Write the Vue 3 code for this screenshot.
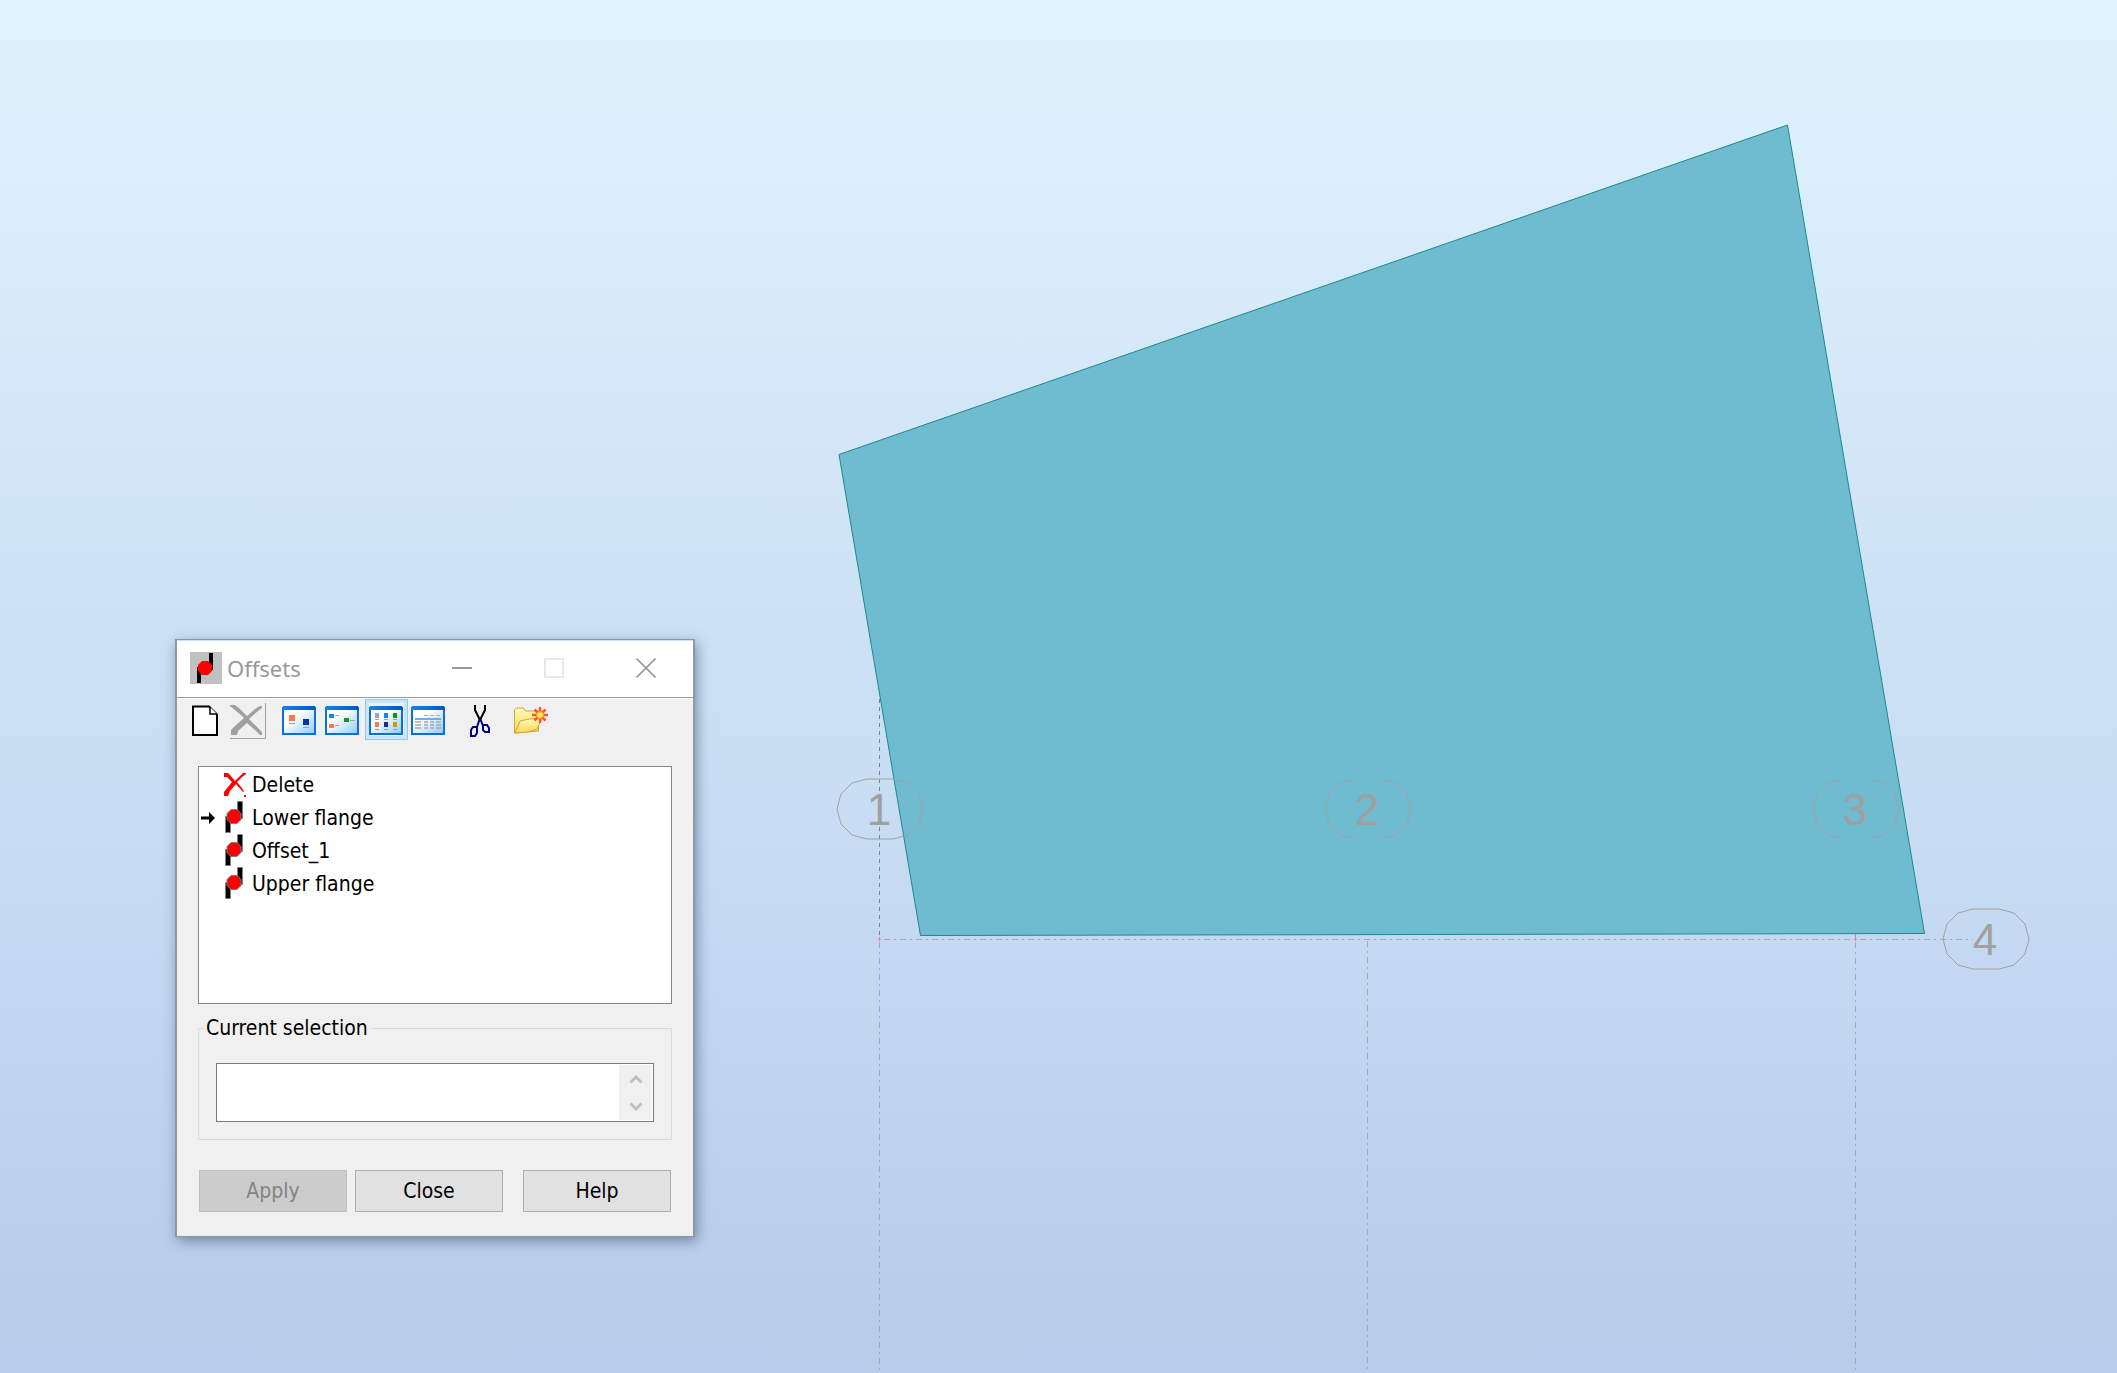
<script setup>
const bubble = [[-43, 0], [-39, -15], [-28, -26], [-13, -30], [13, -30], [28, -26], [39, -15], [43, 0], [39, 15], [28, 26], [13, 30], [-13, 30], [-28, 26], [-39, 15]]
const closed = 'M' + bubble.map((p) => p.join(' ')).join('L') + 'Z'
const open = 'M-13 -30L-28 -26L-39 -15L-43 0L-39 15L-28 26L-13 30M13 -30L28 -26L39 -15L43 0L39 15L28 26L13 30'

const labels = [
  { text: '1', x: 880, y: 809, d: closed },
  { text: '2', x: 1368, y: 809, d: open },
  { text: '3', x: 1856, y: 809, d: open },
  { text: '4', x: 1986, y: 939, d: closed },
]

const items = [
  { name: 'Delete', kind: 'delete' },
  { name: 'Lower flange', kind: 'offset', current: true },
  { name: 'Offset_1', kind: 'offset' },
  { name: 'Upper flange', kind: 'offset' },
]
</script>

<template>
  <main class="workspace">
    <svg class="view" viewBox="0 0 2117 1373" preserveAspectRatio="xMinYMin slice" role="img" aria-label="Panel on grid axes">
      <polygon class="panel" points="839,454.500 1787.500,125 1924.500,933.500 920.500,935.500" />
      <g class="axes" shape-rendering="crispEdges">
        <path class="hidden-line" d="M879.500 699V939" />
        <path d="M884 939.500H1973M879.500 942V1373M1367.500 941V1373M1855.500 942V1373" />
        <path class="solid" d="M1855.500 934V938" />
      </g>
      <path class="node" d="M878 939h3M879.500 937v4M1854 939h3M1855.500 937v4" />
      <g v-for="l in labels" :key="l.text" :transform="`translate(${l.x} ${l.y})`">
        <path class="bubble" :d="l.d" />
        <text class="digit" x="-1" y="16">{{ l.text }}</text>
      </g>
    </svg>

    <section class="dialog" aria-labelledby="dialog-title">
      <header class="titlebar">
        <svg class="app-icon" viewBox="0 0 32 32">
          <path fill="#c0c0c0" d="M0 0h32v32H0z" />
          <path d="M19 1h4v17h-4zM7 15h4v16H7z" />
          <path fill="#f00" d="M12 9h6l4 4v6l-4 4h-6l-4-4v-6z" />
        </svg>
        <h1 id="dialog-title">Offsets</h1>
        <button class="caption" aria-label="Minimize">
          <svg viewBox="0 0 20 20"><path stroke="#999" stroke-width="2" d="M0 10h20" /></svg>
        </button>
        <button class="caption" aria-label="Maximize" disabled>
          <svg viewBox="0 0 20 20"><path fill="none" stroke="#e8e8e8" stroke-width="2" d="M1 1h18v18H1z" /></svg>
        </button>
        <button class="caption" aria-label="Close window">
          <svg viewBox="0 0 20 20"><path stroke="#999" stroke-width="1.600" d="M.5.500l19 19M19.500.500l-19 19" /></svg>
        </button>
      </header>

      <div class="toolbar" role="toolbar" aria-label="Offsets tools">
        <button class="tool page" aria-label="New">
          <svg width="26" height="32" viewBox="0 0 26 32">
            <path fill="#fff" stroke="#000" stroke-width="2" d="M1 1.500h16l8 8V30H1z" />
            <path fill="#fff" stroke="#000" stroke-width="1.500" d="M18 2v7h7" />
          </svg>
        </button>
        <button class="tool cross" aria-label="Remove" disabled>
          <svg width="36" height="36" viewBox="0 0 36 36">
            <path fill="#a0a0a0" d="M0 2h5l5 4 7 7 8-7 5-3h2v2l-4 3-9 8 9 9 4 4v3h-2l-3-3-10-9-9 8-1 4H1v-5l4-4 9-8-9-8-5-4z" />
            <path fill="none" stroke="#a0a0a0" d="M0 35.500h35.500V0" />
          </svg>
        </button>
        <svg width="0" height="0" class="defs" aria-hidden="true">
          <defs>
            <linearGradient id="pane" x1="0" y1="0" x2="1" y2="1">
              <stop offset=".35" stop-color="#fff" /><stop offset="1" stop-color="#8fc8ff" />
            </linearGradient>
            <linearGradient id="bar" x1="0" y1="0" x2="1" y2="0">
              <stop offset="0" stop-color="#1683ee" /><stop offset="1" stop-color="#0058c0" />
            </linearGradient>
            <linearGradient id="folder" x1="0" y1="0" x2="0" y2="1">
              <stop offset="0" stop-color="#fffbb0" /><stop offset="1" stop-color="#fbd75c" />
            </linearGradient>
          </defs>
        </svg>
        <button class="tool large" aria-label="Large icons">
          <svg width="34" height="29" viewBox="0 0 34 29">
            <path fill="url(#pane)" stroke="#0b6fdc" stroke-width="2" d="M1 2h32v26H1z" /><path fill="url(#bar)" d="M1 0h32l1 4H0z" />
            <path fill="#ff7847" d="M7 9h6v6H7z" /><path fill="#0a3699" d="M21 13h6v6h-6z" />
            <path fill="#a0a0a0" d="M7 17h6v1H7zM21 21h6v1h-6z" />
          </svg>
        </button>
        <button class="tool small" aria-label="Small icons">
          <svg width="34" height="29" viewBox="0 0 34 29">
            <path fill="url(#pane)" stroke="#0b6fdc" stroke-width="2" d="M1 2h32v26H1z" /><path fill="url(#bar)" d="M1 0h32l1 4H0z" />
            <path fill="#1683ee" d="M4 8h5v4H4z" /><path fill="#ff7847" d="M4 18h5v4H4z" /><path fill="#0a9a0a" d="M19 12h5v4h-5z" />
            <path fill="#a0a0a0" d="M10 9h4v1h-4zM10 19h4v1h-4zM25 14h5v1h-5z" />
          </svg>
        </button>
        <button class="tool list selected" aria-label="List" aria-pressed="true">
          <svg width="34" height="29" viewBox="0 0 34 29">
            <path fill="url(#pane)" stroke="#0b6fdc" stroke-width="2" d="M1 2h32v26H1z" /><path fill="url(#bar)" d="M1 0h32l1 4H0z" />
            <path fill="#a79bd4" d="M6 7h4v5H6z" /><path fill="#1683ee" d="M15 7h4v5h-4z" /><path fill="#0a9a0a" d="M24 7h4v5h-4z" />
            <path fill="#ff7847" d="M6 16h4v5H6z" /><path fill="#0a3699" d="M15 16h4v5h-4z" /><path fill="#d29b00" d="M24 16h4v5h-4z" />
            <path fill="#a0a0a0" d="M6 13h4v1H6zM15 13h4v1h-4zM24 13h4v1h-4zM6 23h4v1H6zM15 23h4v1h-4zM24 23h4v1h-4z" />
          </svg>
        </button>
        <button class="tool details" aria-label="Details">
          <svg width="34" height="29" viewBox="0 0 34 29">
            <path fill="url(#pane)" stroke="#0b6fdc" stroke-width="2" d="M1 2h32v26H1z" /><path fill="url(#bar)" d="M1 0h32l1 4H0z" />
            <path stroke="#6aaeee" stroke-width="2" d="M4 13h26" />
            <path stroke="#b0b0b0" stroke-dasharray="4 2" d="M13 9.500h17" />
            <path stroke="#a8a8a8" stroke-width="1.500" stroke-dasharray="6 3 4 2 4 2 5 9" d="M4 16h26M4 19h26M4 22h26" />
          </svg>
        </button>
        <button class="tool scissors" aria-label="Cut">
          <svg width="20" height="34" viewBox="0 0 20 34">
            <path fill="none" stroke="#000" stroke-width="2" d="M5 1v5l5 10M15 1v5l-5 10" />
            <path fill="none" stroke="#000080" stroke-width="2" d="M10 14l-3 9M10 14l3 8M3 23h4v6l-2 3H1v-6zM13 21h4l2 3v4h-4l-2-2z" />
          </svg>
        </button>
        <button class="tool folder" aria-label="Open folder">
          <svg width="34" height="27" viewBox="0 0 34 27">
            <path fill="url(#folder)" stroke="#d2a53a" d="M.5 26V3l2-2h7l2 3h13v20L2 26z" />
            <path fill="url(#folder)" stroke="#d2a53a" d="M1 26l5-12 9-2 13-1-5 11-9 3z" />
            <path stroke="#fb5531" stroke-width="2.500" d="M26 0v16M18 8h16M20.500 2.500l11 11M31.500 2.500l-11 11" />
            <circle cx="26" cy="8" r="3.500" fill="#ffe94d" stroke="#ff8e2a" />
          </svg>
        </button>
      </div>

      <div class="body">
        <ul class="items" aria-label="Offsets list">
          <li v-for="item in items" :key="item.name">
            <button class="item" :aria-current="item.current ? 'true' : undefined">
              <svg class="marker" viewBox="0 0 14 12">
                <path v-if="item.current" d="M0 4.500h8V0l6 6-6 6V7.500H0z" />
              </svg>
              <svg v-if="item.kind === 'delete'" class="glyph" viewBox="0 0 22 33">
                <path fill="#f00" d="M0 5h4l2 2 5 6 4-4 4-4h3v1l-4 3-5 5 4 5 3 4-1 1-7-8-6 7-2 5H0v-4l8-10-5-5H0zM20 27h2v2h-2z" />
              </svg>
              <svg v-else class="glyph" viewBox="0 0 22 33">
                <path stroke="#808080" d="M13.500.500h5v17h-5zM1.500 15.500h5v16h-5z" />
                <path fill="#f00" stroke="#808080" d="M7 8.500h6l4 4v6l-4 4H7L3 18.500v-6z" />
              </svg>
              <span>{{ item.name }}</span>
            </button>
          </li>
        </ul>

        <fieldset class="selection">
          <legend><label for="current-selection">Current selection</label></legend>
          <div class="field">
            <textarea id="current-selection"></textarea>
            <div class="scroll" aria-hidden="true">
              <svg viewBox="0 0 12 9"><path d="M.5 7.500L6 2l5.500 5.500" /></svg>
              <svg viewBox="0 0 12 9"><path d="M.5 1.500L6 7l5.500-5.500" /></svg>
            </div>
          </div>
        </fieldset>

        <footer class="actions">
          <button class="action" disabled>Apply</button>
          <button class="action">Close</button>
          <button class="action help">Help</button>
        </footer>
      </div>
    </section>
  </main>
</template>

<style>
body {
  margin: 0;
}
</style>

<style scoped>
* {
  box-sizing: border-box;
}
.workspace {
  position: relative;
  min-height: 100vh;
  overflow: hidden;
  background: linear-gradient(#dff3fe, #b8cceb);
  font-family: "DejaVu Sans Condensed", "DejaVu Sans", sans-serif;
  font-stretch: condensed;
  font-size: 21px;
  color: #000;
}
.view {
  display: block;
  width: 100%;
  height: 100vh;
}
.panel {
  fill: #6fbbcf;
  stroke: #1c8a8e;
  stroke-width: 1;
}
.axes path {
  fill: none;
  stroke: #a5a9b2;
  stroke-dasharray: 6 4 2 4;
}
.axes .hidden-line {
  stroke: #84808a;
  stroke-dasharray: 4 4;
}
.axes .solid {
  stroke: #9a9aa4;
  stroke-dasharray: none;
}
.node {
  stroke: #f08090;
}
.bubble {
  fill: none;
  stroke: #a3a0a2;
  stroke-width: 1;
}
.digit {
  fill: #a0a0a0;
  font: 44px "Liberation Sans", Arial, sans-serif;
  text-anchor: middle;
}
.dialog {
  position: absolute;
  left: 175px;
  top: 639px;
  width: 520px;
  border: solid #8b98a6;
  border-width: 1px 2px;
  background: #f0f0f0;
  box-shadow: 2px 4px 12px rgba(40, 60, 90, 0.5);
}
button {
  padding: 0;
  border: 0;
  background: none;
  font: inherit;
  color: inherit;
}
.titlebar {
  display: flex;
  align-items: center;
  height: 58px;
  padding: 0 1px 2px 13px;
  border-top: 1px solid #cfe0f2;
  border-bottom: 1px solid #999;
  background: #fff;
}
.app-icon {
  width: 32px;
  height: 32px;
}
h1 {
  flex: 1;
  margin: 0 0 0 5px;
  font: 22px/30px "Noto Sans", sans-serif;
  color: #999;
}
.caption {
  display: flex;
  align-items: center;
  justify-content: center;
  width: 92px;
  height: 54px;
}
.caption svg {
  width: 20px;
  height: 20px;
}
.toolbar {
  display: flex;
  align-items: flex-start;
  height: 46px;
  padding: 0 12px;
  border-top: 1px solid #fff;
}
.defs {
  position: absolute;
}
.tool {
  display: flex;
  flex: none;
  align-items: center;
  justify-content: center;
  height: 41px;
  padding-top: 2px;
}
.page {
  width: 32px;
}
.cross {
  width: 36px;
  margin-left: 9px;
}
.large {
  margin-left: 16px;
}
.small {
  margin-left: 9px;
}
.selected {
  width: 43px;
  margin-left: 6px;
  border: 1px solid #90c8f6;
  box-shadow: inset 0 0 0 3px #cce4f7;
}
.selected svg {
  margin-right: 1px;
}
.details {
  margin-left: 3px;
}
.scissors {
  margin-left: 25px;
}
.folder {
  margin-left: 24px;
}
.body {
  padding: 22px 21px 24px;
}
.items {
  height: 238px;
  margin: 0;
  padding: 1px 0;
  border: 1px solid #828790;
  background: #fff;
  list-style: none;
}
.item {
  display: flex;
  align-items: center;
  width: 100%;
  height: 33px;
  padding-left: 2px;
  text-align: left;
}
.marker {
  width: 14px;
  height: 12px;
}
.glyph {
  width: 22px;
  height: 33px;
  margin: 0 6px 0 9px;
}
.selection {
  height: 124px;
  min-width: 0;
  margin: 12px 0 0;
  padding: 22px 17px 0;
  border: 1px solid #dcdcdc;
}
legend {
  margin-left: -11px;
  padding: 0 3px 0 1px;
  line-height: 25px;
}
.field {
  display: flex;
  height: 59px;
  padding: 1px;
  border: 1px solid #7a7a7a;
  background: #fff;
}
textarea {
  flex: 1;
  min-width: 0;
  padding: 4px;
  border: 0;
  outline: 0;
  resize: none;
  background: #fff;
  font: inherit;
}
.scroll {
  display: flex;
  flex-direction: column;
  align-items: center;
  justify-content: space-between;
  width: 33px;
  padding: 10px 0 9px;
  background: #f0f0f0;
}
.scroll svg {
  width: 12px;
  height: 9px;
  fill: none;
  stroke: #bfbfbf;
  stroke-width: 3;
}
.actions {
  display: flex;
  gap: 8px;
  padding: 0 1px;
  margin-top: 30px;
}
.action {
  width: 148px;
  height: 42px;
  border: 1px solid #adadad;
  background: #e1e1e1;
}
.action:disabled {
  border-color: #bfbfbf;
  background: #ccc;
  color: #838383;
}
.help {
  margin-left: auto;
}
</style>
